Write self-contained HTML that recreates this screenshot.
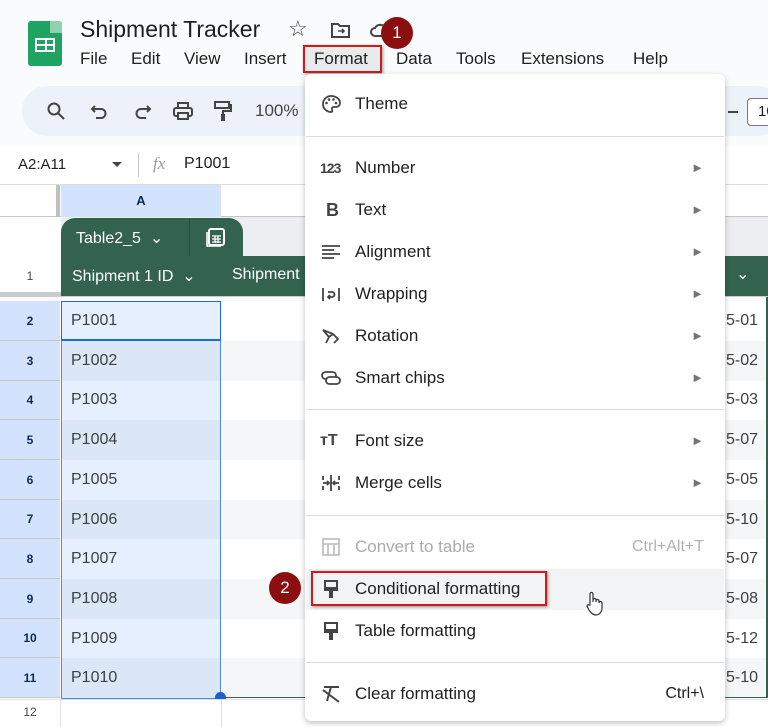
<!DOCTYPE html>
<html><head><meta charset="utf-8"><style>
*{margin:0;padding:0;box-sizing:border-box}
body{width:768px;height:727px;overflow:hidden;background:#f9fbfd;font-family:"Liberation Sans",Arial,sans-serif;position:relative;color:#1f1f1f}
.a{position:absolute}
.rh{position:absolute;left:0;width:60px;text-align:center;font-size:12px;font-weight:bold;color:#0b2a5a;background:#d3e3fd;border-bottom:1px solid #c4c7c5}
.cell{position:absolute;left:61px;width:160px;font-size:16px;color:#3c4043;padding-left:10px;border-bottom:none}
.mi{position:absolute;left:306px;width:418px;height:40px;font-size:17px;color:#1f1f1f;line-height:40px;padding-left:49px}
.ic{position:absolute;left:14px;top:10px;width:22px;height:20px}
.arr{position:absolute;right:20px;top:0;font-size:13px;color:#757575}
.div{position:absolute;left:306px;width:418px;height:1px;background:#dadce0}
.dt{position:absolute;left:726px;font-size:16px;color:#3c4043}
</style></head><body>
<div class="a" style="left:28px;top:21px;width:34px;height:45px;background:#1ea362;border-radius:3px"></div>
<div class="a" style="left:50px;top:21px;width:12px;height:12px;background:#8ed1ae;border-radius:0 3px 0 0"></div>
<div class="a" style="left:35px;top:38px;width:20px;height:14px;border:2px solid #fff;background:linear-gradient(#fff,#fff) 8px 0/2px 100% no-repeat,linear-gradient(#fff,#fff) 0 4px/100% 2px no-repeat"></div>
<div class="a" style="left:80px;top:16px;font-size:23px;color:#1f1f1f">Shipment Tracker</div>
<div class="a" style="left:288px;top:16px;font-size:22px;color:#444">☆</div>
<svg class="a" style="left:330px;top:21px" width="22" height="18"><path d="M2 3h6l2 2h9v11H2z" fill="none" stroke="#444" stroke-width="2"/><path d="M8 10h6m-2-2l2 2-2 2" stroke="#444" stroke-width="1.6" fill="none"/></svg>
<svg class="a" style="left:370px;top:22px" width="20" height="16"><path d="M5 14a4 4 0 010-8 6 6 0 0111 1 3.5 3.5 0 010 7z" fill="none" stroke="#444" stroke-width="2"/></svg>
<div class="a" style="left:381px;top:17px;width:32px;height:32px;border-radius:50%;background:#8b0f0f;color:#fff;font-size:17px;text-align:center;line-height:32px">1</div>
<div class="a" style="top:49px;font-size:17px;color:#1f1f1f;left:80px">File</div>
<div class="a" style="top:49px;font-size:17px;left:131px">Edit</div>
<div class="a" style="top:49px;font-size:17px;left:184px">View</div>
<div class="a" style="top:49px;font-size:17px;left:244px">Insert</div>
<div class="a" style="left:303px;top:45px;width:79px;height:28px;border:2px solid #d11a1a;background:#e8eaed;box-shadow:1px 1px 3px rgba(0,0,0,.4)"></div>
<div class="a" style="top:49px;font-size:17px;left:314px">Format</div>
<div class="a" style="top:49px;font-size:17px;left:396px">Data</div>
<div class="a" style="top:49px;font-size:17px;left:456px">Tools</div>
<div class="a" style="top:49px;font-size:17px;left:521px">Extensions</div>
<div class="a" style="top:49px;font-size:17px;left:633px">Help</div>
<div class="a" style="left:22px;top:86px;width:760px;height:50px;border-radius:25px;background:#edf2fa"></div>
<svg class="a" style="left:46px;top:101px" width="20" height="20"><circle cx="8" cy="8" r="5.5" fill="none" stroke="#444" stroke-width="2"/><path d="M12 12l6 6" stroke="#444" stroke-width="2"/></svg>
<svg class="a" style="left:90px;top:102px" width="20" height="18"><path d="M5 4L2 7l3 3M2 7h9a4.5 4.5 0 010 9H6" fill="none" stroke="#444" stroke-width="2"/></svg>
<svg class="a" style="left:132px;top:102px" width="20" height="18"><path d="M15 4l3 3-3 3M18 7H9a4.5 4.5 0 000 9h5" fill="none" stroke="#444" stroke-width="2"/></svg>
<svg class="a" style="left:172px;top:101px" width="22" height="20"><rect x="2" y="7" width="18" height="8" rx="2" fill="none" stroke="#444" stroke-width="2"/><rect x="6" y="2" width="10" height="5" fill="none" stroke="#444" stroke-width="2"/><rect x="6" y="12" width="10" height="6" fill="#edf2fa" stroke="#444" stroke-width="2"/></svg>
<svg class="a" style="left:213px;top:100px" width="20" height="22"><rect x="2" y="2" width="14" height="6" fill="none" stroke="#444" stroke-width="2"/><path d="M16 5h2v6H10v3" fill="none" stroke="#444" stroke-width="2"/><rect x="8" y="14" width="4" height="7" fill="#444"/></svg>
<div class="a" style="left:255px;top:101px;font-size:17px;color:#444">100%</div>
<div class="a" style="left:728px;top:111px;width:10px;height:2px;background:#444"></div>
<div class="a" style="left:747px;top:98px;width:30px;height:28px;border:1px solid #777;border-radius:4px;background:#fff;font-size:15px;padding:4px 0 0 10px">10</div>
<div class="a" style="left:0;top:145px;width:768px;height:40px;background:#fff;border-bottom:1px solid #dadce0"></div>
<div class="a" style="left:18px;top:156px;font-size:15px">A2:A11</div>
<div class="a" style="left:112px;top:162px;border:5px solid transparent;border-top:5px solid #444"></div>
<div class="a" style="left:138px;top:153px;width:1px;height:24px;background:#c4c7c5"></div>
<div class="a" style="left:153px;top:154px;font-size:17px;font-style:italic;color:#999;font-family:'Liberation Serif',serif">fx</div>
<div class="a" style="left:184px;top:155px;font-size:16px">P1001</div>
<div class="a" style="left:0;top:185px;width:768px;height:32px;background:#fff;border-bottom:1px solid #c4c7c5"></div>
<div class="a" style="left:0;top:185px;width:60px;height:32px;border-right:4px solid #bdc1c6"></div>
<div class="a" style="left:61px;top:185px;width:160px;height:32px;background:#d3e3fd;text-align:center;font-weight:bold;font-size:13px;line-height:32px;color:#0b2a5a">A</div>
<div class="a" style="left:0;top:217px;width:768px;height:40px;background:#fff"></div>
<div class="a" style="left:61px;top:217px;width:707px;height:39px;background:#eceef1"></div>
<div class="a" style="left:61px;top:218px;width:182px;height:39px;background:#33634f;border-radius:14px 14px 0 0"></div>
<div class="a" style="left:189px;top:218px;width:1px;height:39px;background:#25503e"></div>
<div class="a" style="left:76px;top:228px;font-size:16px;color:#fff">Table2_5&nbsp;&nbsp;⌄</div>
<svg class="a" style="left:205px;top:226px" width="22" height="22"><rect x="4" y="3" width="15" height="16" rx="2" fill="none" stroke="#fff" stroke-width="2"/><path d="M2 6v14h14" fill="none" stroke="#fff" stroke-width="1.6"/><path d="M7 10h9M7 13h9M7 16h9M10 10v7M13 10v7" stroke="#fff" stroke-width="1.3"/></svg>
<div class="a" style="left:0;top:256px;width:768px;height:41px;background:#fff;border-bottom:5px solid #c9cbcf"></div>
<div class="a" style="left:0;top:256px;width:60px;height:40px;text-align:center;line-height:40px;font-size:12px;color:#444">1</div>
<div class="a" style="left:61px;top:256px;width:707px;height:40px;background:#33634f"></div>
<div class="a" style="left:72px;top:266px;font-size:16px;color:#fff">Shipment 1 ID&nbsp;&nbsp;⌄</div>
<div class="a" style="left:232px;top:266px;font-size:16px;color:#fff">Shipment</div>
<div class="a" style="left:736px;top:264px;font-size:16px;color:#fff">⌄</div>
<div class="a" style="left:0;top:301px;width:768px;height:398px;background:#fff"></div>
<div class="rh" style="top:301px;height:40px;line-height:40px">2</div>
<div class="rh" style="top:341px;height:40px;line-height:40px">3</div>
<div class="rh" style="top:381px;height:39px;line-height:39px">4</div>
<div class="rh" style="top:420px;height:40px;line-height:40px">5</div>
<div class="rh" style="top:460px;height:40px;line-height:40px">6</div>
<div class="rh" style="top:500px;height:39px;line-height:39px">7</div>
<div class="rh" style="top:539px;height:40px;line-height:40px">8</div>
<div class="rh" style="top:579px;height:40px;line-height:40px">9</div>
<div class="rh" style="top:619px;height:39px;line-height:39px">10</div>
<div class="rh" style="top:658px;height:40px;line-height:40px">11</div>
<div class="a" style="left:221px;top:341px;width:547px;height:40px;background:#f5f6f8"></div>
<div class="a" style="left:221px;top:420px;width:547px;height:40px;background:#f5f6f8"></div>
<div class="a" style="left:221px;top:500px;width:547px;height:39px;background:#f5f6f8"></div>
<div class="a" style="left:221px;top:579px;width:547px;height:40px;background:#f5f6f8"></div>
<div class="a" style="left:221px;top:658px;width:547px;height:40px;background:#f5f6f8"></div>
<div class="a" style="left:61px;top:301px;width:160px;height:398px;background:#e6effd;border:1px solid #4a89e8"></div>
<div class="a" style="left:62px;top:341px;width:158px;height:40px;background:#dbe6f6"></div>
<div class="a" style="left:62px;top:420px;width:158px;height:40px;background:#dbe6f6"></div>
<div class="a" style="left:62px;top:500px;width:158px;height:39px;background:#dbe6f6"></div>
<div class="a" style="left:62px;top:579px;width:158px;height:40px;background:#dbe6f6"></div>
<div class="a" style="left:62px;top:658px;width:158px;height:40px;background:#dbe6f6"></div>
<div class="a" style="left:61px;top:301px;width:160px;height:40px;border:1px solid #1a6ae0;border-bottom-width:2px;background:#e6effd"></div>
<div class="a" style="left:221px;top:697px;width:547px;height:1px;background:#33634f"></div>
<div class="a" style="left:766px;top:297px;width:2px;height:401px;background:#33634f"></div>
<div class="cell" style="top:312px">P1001</div>
<div class="cell" style="top:352px">P1002</div>
<div class="cell" style="top:391px">P1003</div>
<div class="cell" style="top:431px">P1004</div>
<div class="cell" style="top:471px">P1005</div>
<div class="cell" style="top:511px">P1006</div>
<div class="cell" style="top:550px">P1007</div>
<div class="cell" style="top:590px">P1008</div>
<div class="cell" style="top:630px">P1009</div>
<div class="cell" style="top:669px">P1010</div>
<div class="dt" style="top:312px">5-01</div><div class="dt" style="top:352px">5-02</div><div class="dt" style="top:391px">5-03</div><div class="dt" style="top:431px">5-07</div><div class="dt" style="top:471px">5-05</div><div class="dt" style="top:511px">5-10</div><div class="dt" style="top:550px">5-07</div><div class="dt" style="top:590px">5-08</div><div class="dt" style="top:630px">5-12</div><div class="dt" style="top:669px">5-10</div>
<div class="a" style="left:215px;top:692px;width:11px;height:11px;border-radius:50%;background:#1a5fd6"></div>
<div class="a" style="left:0;top:699px;width:768px;height:28px;background:#fff;border-top:1px solid #e0e0e0"></div>
<div class="a" style="left:0;top:700px;width:60px;text-align:center;font-size:12px;color:#444;line-height:24px">12</div>
<div class="a" style="left:60px;top:699px;width:1px;height:28px;background:#e0e0e0"></div>
<div class="a" style="left:221px;top:699px;width:1px;height:28px;background:#e0e0e0"></div>
<div class="a" style="left:305px;top:74px;width:420px;height:647px;background:#fff;border-radius:6px;box-shadow:0 2px 6px rgba(0,0,0,.25)"></div>
<div class="mi" style="top:84px"><svg class="ic" viewBox="0 0 22 20"><path d="M11 2a8 8 0 000 16c1.5 0 1.5-1.5 1-2.5s0-2.5 1.5-2.5H16a4 4 0 004-4c0-4-4-7-9-7z" fill="none" stroke="#444" stroke-width="1.8"/><circle cx="6.5" cy="9" r="1.3" fill="#444"/><circle cx="9" cy="5.5" r="1.3" fill="#444"/><circle cx="13.5" cy="5.5" r="1.3" fill="#444"/><circle cx="16" cy="9" r="1.3" fill="#444"/></svg>Theme</div>
<div class="div" style="top:136px"></div>
<div class="mi" style="top:148px"><span class="a" style="left:14px;font-size:14px;font-weight:bold;letter-spacing:-1px;color:#444">123</span>Number<span class="arr">►</span></div>
<div class="mi" style="top:190px"><span class="a" style="left:20px;font-size:18px;font-weight:bold;color:#444">B</span>Text<span class="arr">►</span></div>
<div class="mi" style="top:232px"><svg class="ic" viewBox="0 0 22 20"><path d="M2 4h18M2 8h12M2 12h18M2 16h12" stroke="#444" stroke-width="1.8"/></svg>Alignment<span class="arr">►</span></div>
<div class="mi" style="top:274px"><svg class="ic" viewBox="0 0 22 20"><path d="M3 4v13M19 4v13M8 8h4a2.5 2.5 0 010 5H8m2-2l-2 2 2 2" fill="none" stroke="#444" stroke-width="1.8"/></svg>Wrapping<span class="arr">►</span></div>
<div class="mi" style="top:316px"><svg class="ic" viewBox="0 0 22 20"><path d="M3 4l10 4M3 4l6 7M9 11l-3 6M13 8l5 5-4 4M9 11l4-3" fill="none" stroke="#444" stroke-width="1.8"/></svg>Rotation<span class="arr">►</span></div>
<div class="mi" style="top:358px"><svg class="ic" viewBox="0 0 22 20"><rect x="2" y="4" width="14" height="7" rx="3.5" fill="none" stroke="#444" stroke-width="1.8"/><rect x="6" y="9" width="14" height="7" rx="3.5" fill="#fff" stroke="#444" stroke-width="1.8"/></svg>Smart chips<span class="arr">►</span></div>
<div class="div" style="top:409px"></div>
<div class="mi" style="top:421px"><span class="a" style="left:14px;font-size:16px;font-weight:bold;color:#444">ᴛT</span>Font size<span class="arr">►</span></div>
<div class="mi" style="top:463px"><svg class="ic" viewBox="0 0 22 20"><path d="M3 3v4M3 13v4M19 3v4M19 13v4M3 10h6m-2-2l2 2-2 2M19 10h-6m2-2l-2 2 2 2M11 2v16" fill="none" stroke="#444" stroke-width="1.8"/></svg>Merge cells<span class="arr">►</span></div>
<div class="div" style="top:515px"></div>
<div class="mi" style="top:527px;color:#a8abaf"><svg class="ic" viewBox="0 0 22 20"><rect x="3" y="2" width="16" height="16" fill="none" stroke="#bbb" stroke-width="1.6"/><path d="M3 7h16M8 7v11M14 7v11" stroke="#bbb" stroke-width="1.6"/></svg>Convert to table<span class="arr" style="font-size:16px;color:#b0b3b6">Ctrl+Alt+T</span></div>
<div class="a" style="left:306px;top:569px;width:418px;height:41px;background:#f1f3f4"></div>
<div class="mi" style="top:569px"><svg class="ic" viewBox="0 0 22 20"><path d="M5 2h12v9H5z" fill="none" stroke="#444" stroke-width="2"/><path d="M5 8h12v4H5zM9 12h4v7H9z" fill="#444"/></svg>Conditional formatting</div>
<div class="a" style="left:311px;top:571px;width:236px;height:35px;border:2px solid #d11a1a;box-shadow:1px 1px 3px rgba(0,0,0,.4)"></div>
<div class="a" style="left:269px;top:572px;width:32px;height:32px;border-radius:50%;background:#8b0f0f;color:#fff;font-size:17px;text-align:center;line-height:32px">2</div>
<svg class="a" style="left:584px;top:591px" width="20" height="26"><path d="M6 14V3a1.5 1.5 0 013 0v8 -2a1.5 1.5 0 013 0v2 -1a1.5 1.5 0 013 0v2a1.5 1.5 0 013 0v5c0 4-3 7-6 7s-5-2-7-5l-2-4a1.3 1.3 0 012-1z" fill="#fff" stroke="#333" stroke-width="1.2"/></svg>
<div class="mi" style="top:611px"><svg class="ic" viewBox="0 0 22 20"><path d="M5 2h12v9H5z" fill="none" stroke="#444" stroke-width="2"/><path d="M5 8h12v4H5zM9 12h4v7H9z" fill="#444"/></svg>Table formatting</div>
<div class="div" style="top:662px"></div>
<div class="mi" style="top:674px"><svg class="ic" viewBox="0 0 22 20"><path d="M4 3h15M11 3L7 17M3 6l16 12" fill="none" stroke="#444" stroke-width="2"/></svg>Clear formatting<span class="arr" style="font-size:16px;color:#1f1f1f">Ctrl+\</span></div>
</body></html>
